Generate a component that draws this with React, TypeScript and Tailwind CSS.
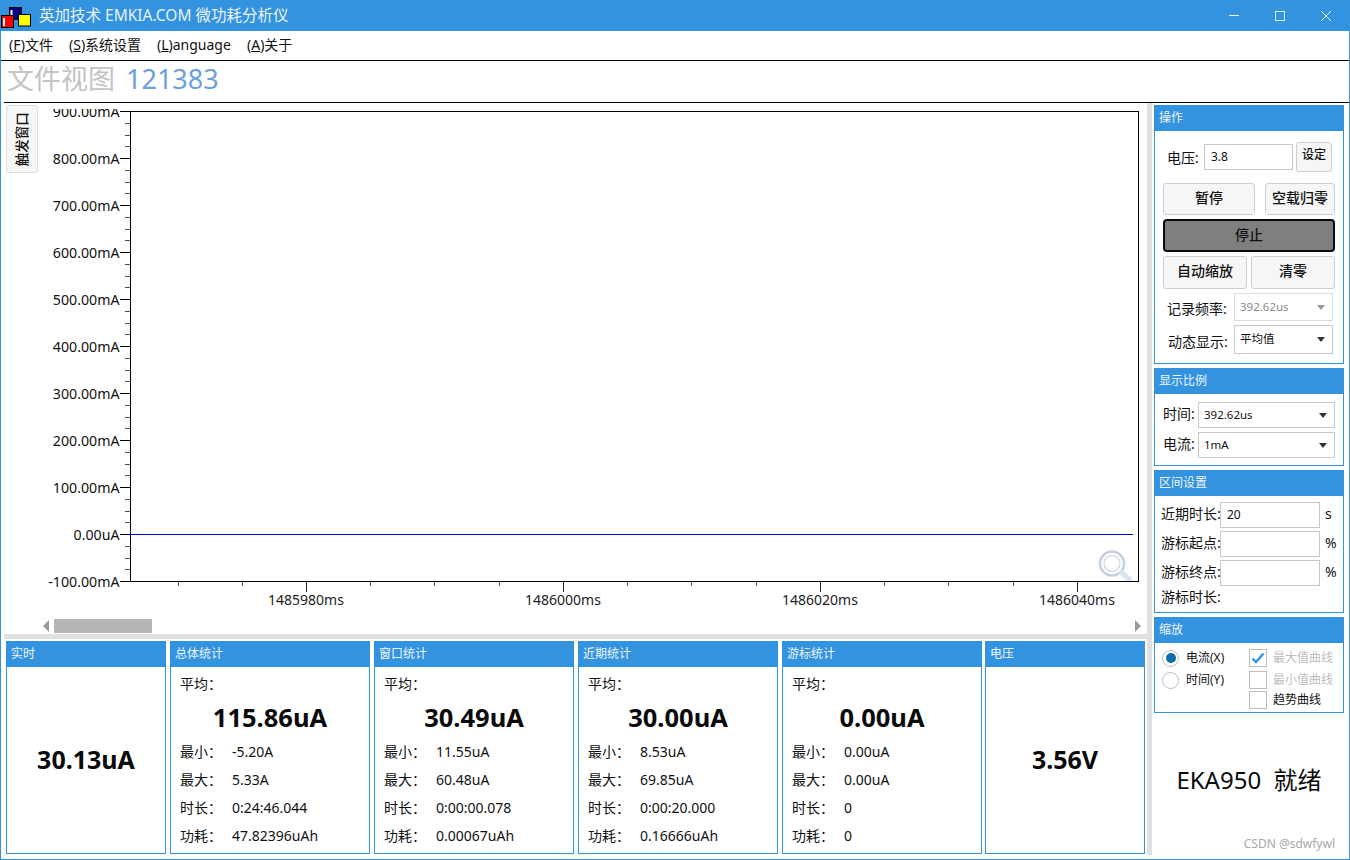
import React from "react";

const FONT = "font-['Noto_Sans','Noto_Sans_CJK_SC',sans-serif]";

function Logo() {
  return (
    <svg width="32" height="28" viewBox="0 0 32 28" className="-ml-[1px] shrink-0">
      <rect x="9.5" y="5.5" width="12" height="12" fill="#000080" stroke="#000" />
      <rect x="10.5" y="8" width="2" height="8" fill="#fff" />
      <rect x="1.5" y="13.5" width="12" height="12" fill="#ff0000" stroke="#000" />
      <rect x="3" y="16" width="2" height="8" fill="#fff" />
      <rect x="18.5" y="12.5" width="12" height="11.5" fill="#ffff00" stroke="#000" />
    </svg>
  );
}

function WindowButtons() {
  return (
    <svg width="130" height="31" viewBox="1219 0 130 31" className="shrink-0" stroke="#e8f2fb" fill="none">
      <path d="M1229 15.5h10" />
      <rect x="1275.5" y="11.5" width="9" height="9" />
      <path d="M1321 11l10 10M1331 11l-10 10" />
    </svg>
  );
}

function Chart() {
  const yLabels = ["900.00mA", "800.00mA", "700.00mA", "600.00mA", "500.00mA", "400.00mA", "300.00mA", "200.00mA", "100.00mA", "0.00uA", "-100.00mA"];
  const yMinor: number[] = [];
  for (let i = 0; i < 40; i++) if (i % 4 !== 0) yMinor.push(111 + i * 11.75);
  const xMinor = [178, 242, 370, 434, 499, 627, 691, 756, 884, 948, 1013];
  const xMajor = [
    [306, "1485980ms"],
    [563, "1486000ms"],
    [820, "1486020ms"],
    [1077, "1486040ms"],
  ] as [number, string][];
  return (
    <svg width="1143" height="501" viewBox="4 109 1143 501" className="block shrink-0" fontFamily="'Noto Sans','Noto Sans CJK SC',sans-serif" fontSize="14">
      <g fill="none" stroke="#c3cfdc">
        <circle cx="1112" cy="563.5" r="12" strokeWidth="2.5" />
        <circle cx="1112" cy="563.5" r="8" strokeWidth="1.5" stroke="#d3dde8" />
        <path d="M1122 573l7 6" strokeWidth="5.5" stroke="#dbe5f0" strokeLinecap="round" />
      </g>
      <rect x="130.5" y="111.5" width="1008" height="470" fill="none" stroke="#000" />
      {yLabels.map((t, i) => (
        <g key={t}>
          <path d={`M120 ${111.5 + i * 47}h10`} stroke="#000" />
          <text x="119.5" y={116.5 + i * 47} textAnchor="end" fill="#111" fontSize="14.2">{t}</text>
        </g>
      ))}
      {yMinor.map((y) => (
        <path key={y} d={`M125 ${Math.round(y) + 0.5}h5`} stroke="#555" />
      ))}
      {xMinor.map((x) => (
        <path key={x} d={`M${x}.5 582v4`} stroke="#555" />
      ))}
      {xMajor.map(([x, t]) => (
        <g key={t}>
          <path d={`M${x}.5 582v10`} stroke="#222" />
          <text x={x} y="605" textAnchor="middle" fill="#222">{t}</text>
        </g>
      ))}
      <path d="M130 534.5H1133" stroke="#0000f0" />
    </svg>
  );
}

function Scrollbar() {
  return (
    <div className="flex h-[14px] items-center mt-[9px] ml-[39px] w-[1105px] shrink-0">
      <svg width="8" height="14" viewBox="0 0 8 14" className="shrink-0 ml-[2px]">
        <path d="M7 1v12L1 7z" fill="#9a9a9a" />
      </svg>
      <div className="ml-[4px] h-[14px] w-[98px] bg-[#b6b6b6]" />
      <div className="flex-1" />
      <svg width="8" height="14" viewBox="0 0 8 14" className="shrink-0 mr-[3px]">
        <path d="M1 1v12l6-6z" fill="#9a9a9a" />
      </svg>
    </div>
  );
}

function CardHead({ title }: { title: string }) {
  return <div className="h-[25px] shrink-0 bg-[#3493df] px-[4px] text-[12px] leading-[23px] text-[#eef6fd]">{title}</div>;
}

function BigCard({ title, value, cls }: { title: string; value: string; cls: string }) {
  return (
    <div className={`flex h-[213px] w-[160px] shrink-0 flex-col border border-[#3493df] ${cls}`}>
      <CardHead title={title} />
      <div className="flex flex-1 items-center justify-center text-[25px] font-bold text-[#0a0a0a]">{value}</div>
    </div>
  );
}

function StatCard({ title, avg, rows, cls }: { title: string; avg: string; rows: string[]; cls: string }) {
  const labels = ["最小：", "最大：", "时长：", "功耗："];
  return (
    <div className={`flex h-[213px] w-[200px] shrink-0 flex-col border border-[#3493df] ${cls}`}>
      <CardHead title={title} />
      <div className="pl-[9px] pt-[3px] text-[14px] text-[#111]">
        <div className="h-[28px] leading-[28px]">平均：</div>
        <div className="h-[39px] pr-[9px] text-center text-[25.5px] font-bold leading-[39px] text-[#0a0a0a]">{avg}</div>
        {rows.map((v, i) => (
          <div key={labels[i]} className="flex h-[28px] items-center">
            <span className="w-[52px] shrink-0">{labels[i]}</span>
            <span>{v}</span>
          </div>
        ))}
      </div>
    </div>
  );
}

function Panel({ title, h, cls, children }: { title: string; h: string; cls?: string; children: React.ReactNode }) {
  return (
    <div className={`flex w-[190px] shrink-0 flex-col border border-[#3493df] ${h} ${cls ?? ""}`}>
      <CardHead title={title} />
      {children}
    </div>
  );
}

function Btn({ cls, children }: { cls: string; children: React.ReactNode }) {
  return (
    <div className={`flex shrink-0 items-center justify-center rounded-[3px] border border-[#cfcfcf] bg-[#f6f6f6] pb-[4px] font-medium text-[#111] ${cls}`}>
      {children}
    </div>
  );
}

function Select({ value, w, h, disabled }: { value: string; w: string; h: string; disabled?: boolean }) {
  return (
    <div className={`flex shrink-0 items-center justify-between border pl-[5px] pr-[7px] text-[11.5px] ${w} ${h} ${disabled ? "border-[#dcdcdc] text-[#8a8a8a]" : "border-[#c8c8c8] text-[#111]"}`}>
      <span className="pb-[1px]">{value}</span>
      <svg width="8" height="5" viewBox="0 0 8 5"><path d="M0 0h8L4 5z" fill={disabled ? "#999" : "#333"} /></svg>
    </div>
  );
}

function Field({ value, w, h }: { value?: string; w: string; h: string }) {
  return <div className={`flex shrink-0 items-center border border-[#c8c8c8] pb-[1px] pl-[6px] text-[12px] text-[#111] ${w} ${h}`}>{value}</div>;
}

function Radio({ on }: { on?: boolean }) {
  return (
    <span className="flex h-[17px] w-[17px] shrink-0 items-center justify-center rounded-full border border-[#bcbcbc]">
      {on && <span className="h-[10px] w-[10px] rounded-full bg-[#0b6ea6]" />}
    </span>
  );
}

function Check({ on }: { on?: boolean }) {
  return (
    <span className="flex h-[18px] w-[18px] shrink-0 items-center justify-center border border-[#bcbcbc]">
      {on && (
        <svg width="14" height="12" viewBox="0 0 14 12" fill="none">
          <path d="M1.5 6.5l3.5 3.5 7.5-8.5" stroke="#3493df" strokeWidth="2.4" />
        </svg>
      )}
    </span>
  );
}

export default function App() {
  return (
    <div className={`flex h-[860px] w-[1350px] flex-col overflow-hidden border-x border-b border-[#3493df] bg-white ${FONT}`}>
      {/* Title bar */}
      <div className="flex h-[31px] shrink-0 items-center bg-[#3493df] text-[#e8f2fb]">
        <Logo />
        <span className="ml-[7px] flex-1 whitespace-nowrap text-[15.5px]">英加技术 EMKIA.COM 微功耗分析仪</span>
        <WindowButtons />
      </div>

      {/* Menu */}
      <div className="flex h-[30px] shrink-0 items-center border-b border-black pb-[2px] pl-[8px] text-[14px] text-[#111]">
        <span className="w-[60px]">(<u>F</u>)文件</span>
        <span className="w-[88px]">(<u>S</u>)系统设置</span>
        <span className="w-[90px]">(<u>L</u>)anguage</span>
        <span>(<u>A</u>)关于</span>
      </div>

      {/* Heading */}
      <div className="ml-[3px] flex h-[42px] shrink-0 items-center gap-[11px] border-b border-black pb-[4px] pl-[3px] text-[27px]">
        <span className="text-[#c4c4c4]">文件视图</span>
        <span className="text-[#6a9fdb]">121383</span>
      </div>

      {/* Body */}
      <div className="flex min-h-0 flex-1">
        <div className="flex w-[1146px] shrink-0 flex-col">
          <div className="relative pl-[3px] pt-[6px]">
            <Chart />
            <div className="absolute left-[5px] top-[2px] flex h-[68px] w-[32px] items-center justify-center rounded-[3px] border border-[#dedede] bg-[#f6f6f6] pt-[1px] text-[13.5px] font-medium text-[#111]">
              <span className="-rotate-90 whitespace-nowrap">触发窗口</span>
            </div>
          </div>
          <Scrollbar />
          <div className="ml-[3px] mt-[1px] h-[5px] w-[1143px] shrink-0 bg-[#e0e0e0]" />
          <div className="mt-[2px] flex pl-[5px]">
            <BigCard title="实时" value="30.13uA" cls="" />
            <StatCard title="总体统计" avg="115.86uA" cls="ml-[4px]" rows={["-5.20A", "5.33A", "0:24:46.044", "47.82396uAh"]} />
            <StatCard title="窗口统计" avg="30.49uA" cls="ml-[4px]" rows={["11.55uA", "60.48uA", "0:00:00.078", "0.00067uAh"]} />
            <StatCard title="近期统计" avg="30.00uA" cls="ml-[4px]" rows={["8.53uA", "69.85uA", "0:00:20.000", "0.16666uAh"]} />
            <StatCard title="游标统计" avg="0.00uA" cls="ml-[4px]" rows={["0.00uA", "0.00uA", "0", "0"]} />
            <BigCard title="电压" value="3.56V" cls="ml-[3px]" />
          </div>
        </div>

        <div className="h-[752px] w-[5px] shrink-0 bg-[#e0e0e0]" />

        {/* Right column */}
        <div className="flex flex-1 flex-col pl-[2px] pt-[2px] text-[14px] text-[#111]">
          <Panel title="操作" h="h-[259px]">
            <div className="ml-[13px] mt-[11px] flex h-[30px] items-center">
              <span className="w-[36px] -ml-[1px] mr-[1px]">电压:</span>
              <Field value="3.8" w="w-[89px]" h="h-[26px]" />
              <Btn cls="ml-[3px] h-[30px] w-[36px] text-[12px]">设定</Btn>
            </div>
            <div className="ml-[8px] mt-[11px] flex">
              <Btn cls="h-[32px] w-[92px]">暂停</Btn>
              <Btn cls="ml-[10px] h-[32px] w-[70px]">空载归零</Btn>
            </div>
            <div className="ml-[8px] mt-[4px] flex h-[33px] w-[172px] items-center justify-center rounded-[4px] border-2 border-[#0a0a0a] bg-[#7f7f7f] pb-[3px] font-medium">
              停止
            </div>
            <div className="ml-[8px] mt-[4px] flex gap-[4px]">
              <Btn cls="h-[33px] w-[84px]">自动缩放</Btn>
              <Btn cls="h-[33px] w-[84px]">清零</Btn>
            </div>
            <div className="ml-[13px] mt-[4px] flex items-center">
              <span className="w-[66px] whitespace-nowrap pt-[2px] -ml-[1px] mr-[1px]">记录频率:</span>
              <Select value="392.62us" w="w-[99px]" h="h-[28px]" disabled />
            </div>
            <div className="ml-[13px] mt-[4px] flex items-center">
              <span className="w-[66px] whitespace-nowrap pt-[4px]">动态显示:</span>
              <Select value="平均值" w="w-[99px]" h="h-[29px]" />
            </div>
          </Panel>

          <Panel title="显示比例" h="h-[98px]" cls="mt-[4px]">
            <div className="ml-[8px] mt-[8px] flex items-center">
              <span className="w-[35px] whitespace-nowrap pb-[4px]">时间:</span>
              <Select value="392.62us" w="w-[137px]" h="h-[26px]" />
            </div>
            <div className="ml-[8px] mt-[4px] flex items-center">
              <span className="w-[35px] whitespace-nowrap pb-[4px]">电流:</span>
              <Select value="1mA" w="w-[137px]" h="h-[26px]" />
            </div>
          </Panel>

          <Panel title="区间设置" h="h-[143px]" cls="mt-[4px]">
            <div className="ml-[6px] mt-[6px] flex items-center">
              <span className="w-[59px] whitespace-nowrap pb-[4px]">近期时长:</span>
              <Field value="20" w="w-[100px]" h="h-[26px]" />
              <span className="ml-[5px] pb-[3px]">s</span>
            </div>
            <div className="ml-[6px] mt-[3px] flex items-center">
              <span className="w-[59px] whitespace-nowrap pb-[4px]">游标起点:</span>
              <Field w="w-[100px]" h="h-[26px]" />
              <span className="ml-[5px] pb-[3px]">%</span>
            </div>
            <div className="ml-[6px] mt-[3px] flex items-center">
              <span className="w-[59px] whitespace-nowrap pb-[4px]">游标终点:</span>
              <Field w="w-[100px]" h="h-[26px]" />
              <span className="ml-[5px] pb-[3px]">%</span>
            </div>
            <div className="ml-[6px] flex h-[24px] items-center pb-[4px]">游标时长:</div>
          </Panel>

          <Panel title="缩放" h="h-[96px]" cls="mt-[4px]">
            <div className="ml-[7px] mt-[6px] flex h-[18px] items-center text-[12px]">
              <Radio on />
              <span className="ml-[7px] w-[63px]">电流(X)</span>
              <Check on />
              <span className="ml-[6px] text-[#bdbdbd]">最大值曲线</span>
            </div>
            <div className="ml-[7px] mt-[4px] flex h-[18px] items-center text-[12px]">
              <Radio />
              <span className="ml-[7px] w-[63px]">时间(Y)</span>
              <Check />
              <span className="ml-[6px] text-[#bdbdbd]">最小值曲线</span>
            </div>
            <div className="ml-[94px] mt-[2px] flex h-[18px] items-center text-[12px]">
              <Check />
              <span className="ml-[6px]">趋势曲线</span>
            </div>
          </Panel>

          <div className="flex h-[124px] w-[190px] shrink-0 items-center justify-center pt-[10px] text-[24px] text-[#0a0a0a]">
            <span className="whitespace-pre">EKA950  就绪</span>
          </div>
          <div className="w-[181px] text-right text-[12px] leading-[14px] text-[#a9a9a9]">CSDN @sdwfywl</div>
        </div>
      </div>
    </div>
  );
}
